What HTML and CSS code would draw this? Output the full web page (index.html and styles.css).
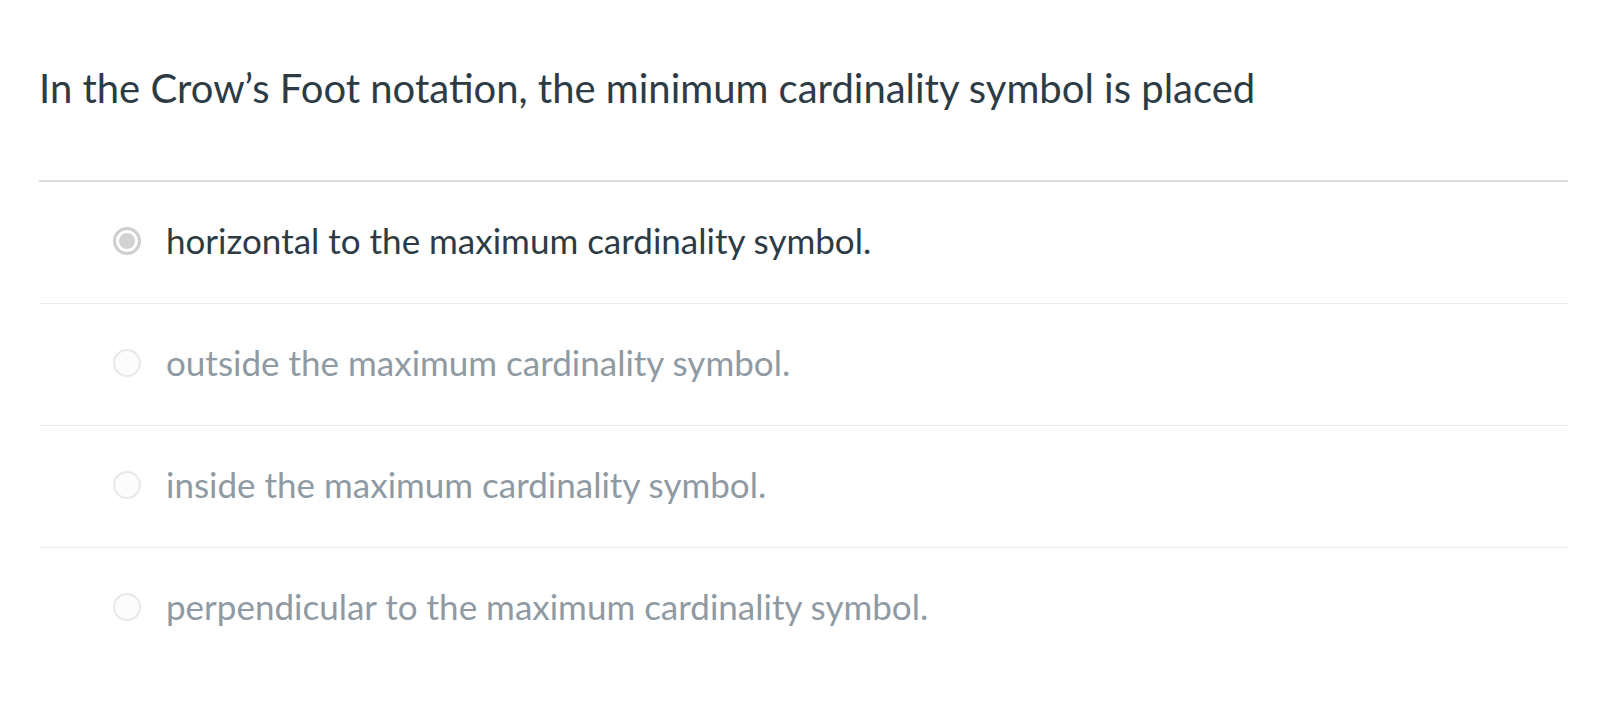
FILE: index.html
```html
<!DOCTYPE html>
<html lang="en">
<head>
<meta charset="utf-8">
<title>Quiz question</title>
<link rel="stylesheet" href="styles.css">
</head>
<body>
<div class="question">
  <div class="question-text">In the Crow’s Foot notation, the minimum cardinality symbol is placed</div>
  <div class="answers">
    <label class="answer selected">
      <span class="radio"></span>
      <span class="answer-text">horizontal to the maximum cardinality symbol.</span>
    </label>
    <label class="answer">
      <span class="radio"></span>
      <span class="answer-text">outside the maximum cardinality symbol.</span>
    </label>
    <label class="answer">
      <span class="radio"></span>
      <span class="answer-text">inside the maximum cardinality symbol.</span>
    </label>
    <label class="answer last">
      <span class="radio"></span>
      <span class="answer-text">perpendicular to the maximum cardinality symbol.</span>
    </label>
  </div>
</div>
</body>
</html>
```
FILE: styles.css
```css
html, body {
  margin: 0;
  padding: 0;
  background: #ffffff;
}
body {
  font-family: Lato, "Open Sans", "Liberation Sans", sans-serif;
  color: #2d3b45;
}
.question {
  padding: 0 34px 0 39px;
}
.question-text {
  font-size: 40px;
  line-height: 48px;
  padding-top: 64px;
  padding-bottom: 68px;
  border-bottom: 2px solid #dcdcdc;
}
.answers {
  display: flex;
  flex-direction: column;
}
.answer {
  display: flex;
  align-items: center;
  height: 121px;
  box-sizing: content-box;
  border-bottom: 1px solid #ececec;
  padding-left: 74px;
}
.answer.last {
  border-bottom: none;
}
.radio {
  flex: none;
  width: 28px;
  height: 28px;
  border-radius: 50%;
  border: 2px solid #e8e8e8;
  background: #fcfcfc;
  margin-right: 25px;
  margin-bottom: 4px;
  box-sizing: border-box;
}
.answer.selected .radio {
  border: 3px solid #cfcfcf;
  background: #d2d2d2;
  box-shadow: inset 0 0 0 3px #ffffff;
}
.answer-text {
  font-size: 35px;
  line-height: 44px;
  padding-bottom: 5px;
  color: #8f9aa3;
}
.answer.selected .answer-text {
  color: #2d3b45;
}
```
